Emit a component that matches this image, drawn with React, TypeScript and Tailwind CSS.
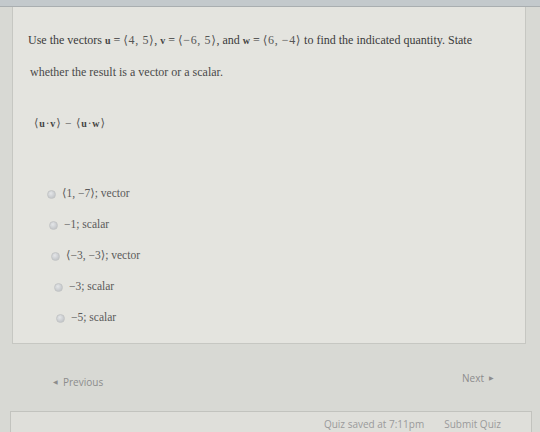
import React from 'react';

const serif = { fontFamily: '"Liberation Serif", "DejaVu Serif", serif' };
const sans = { fontFamily: '"Open Sans", "Noto Sans", sans-serif' };

function Vec({ children }: { children: React.ReactNode }) {
    return <b className="font-bold text-[10px] text-[#444]">{children}</b>;
}

function Math({ children }: { children: React.ReactNode }) {
    return <span className="text-[#555] tracking-[0.6px]">{children}</span>;
}

function Radio() {
    return (
        <span className="inline-block w-[9px] h-[9px] rounded-full bg-[radial-gradient(circle_at_40%_35%,#e4e6e8,#b9bcc0)] border border-[#c3c5c6] shrink-0" />
    );
}

const options = [
    { label: '⟨1, −7⟩; vector', pad: 'pl-[19px]' },
    { label: '−1; scalar', pad: 'pl-[21px]' },
    { label: '⟨−3, −3⟩; vector', pad: 'pl-[23px]' },
    { label: '−3; scalar', pad: 'pl-[26px]' },
    { label: '−5; scalar', pad: 'pl-[28px]' },
];

export default function App() {
    return (
        <div className="w-[540px] h-[432px] bg-[#d8d9d4] overflow-hidden flex flex-col">
            <div className="h-[7px] bg-[#c3c9cc] border-b border-[#a9aeb0] shrink-0" />

            <div className="ml-[12px] mr-[14px] h-[337px] bg-[#e4e4df] border-x border-b border-[#c6c7c2] shrink-0 pt-[26px] pl-[15px] text-[#3b3b3b]" style={serif}>
                <p className="text-[12px] leading-[14px] whitespace-nowrap">
                    Use the vectors <Vec>u</Vec> = <Math>⟨4, 5⟩</Math>,{' '}
                    <Vec>v</Vec> = <Math>⟨−6, 5⟩</Math>, and{' '}
                    <Vec>w</Vec> = <Math>⟨6, −4⟩</Math> to find the indicated quantity. State
                </p>
                <p className="text-[12px] leading-[14px] mt-[17px] pl-[2px] text-[#4a4a4a]">
                    whether the result is a vector or a scalar.
                </p>
                <p className="text-[11.5px] leading-[14px] mt-[37px] pl-[6px] text-[#555] tracking-[0.8px]">
                    ⟨<Vec>u</Vec>·<Vec>v</Vec>⟩ − ⟨<Vec>u</Vec>·<Vec>w</Vec>⟩
                </p>

                <div className="mt-[56px] flex flex-col gap-[17px]">
                    {options.map((o) => (
                        <div key={o.label} className={`flex items-center gap-[6px] ${o.pad} h-[14px]`}>
                            <Radio />
                            <span className="text-[11.5px] text-[#5a5a5a]">{o.label}</span>
                        </div>
                    ))}
                </div>
            </div>

            <div className="flex justify-between items-center pl-[53px] pr-[46px] mt-[29px] h-[14px] text-[10px] text-[#8c8c8c]" style={sans}>
                <span className="flex items-center gap-[5px] mt-[5px]">
                    <span className="text-[6px]">◀</span>Previous
                </span>
                <span className="flex items-center gap-[5px] -mt-[3px]">
                    Next<span className="text-[6px]">▶</span>
                </span>
            </div>

            <div className="mt-[24px] ml-[10px] mr-[8px] flex-1 bg-[#dfdfda] border-t border-x border-[#c2c3be] flex justify-end items-start gap-[20px] pr-[30px] pt-[5px] text-[10px] text-[#9a9a9a]" style={sans}>
                <span>Quiz saved at 7:11pm</span>
                <span>Submit Quiz</span>
            </div>
        </div>
    );
}
